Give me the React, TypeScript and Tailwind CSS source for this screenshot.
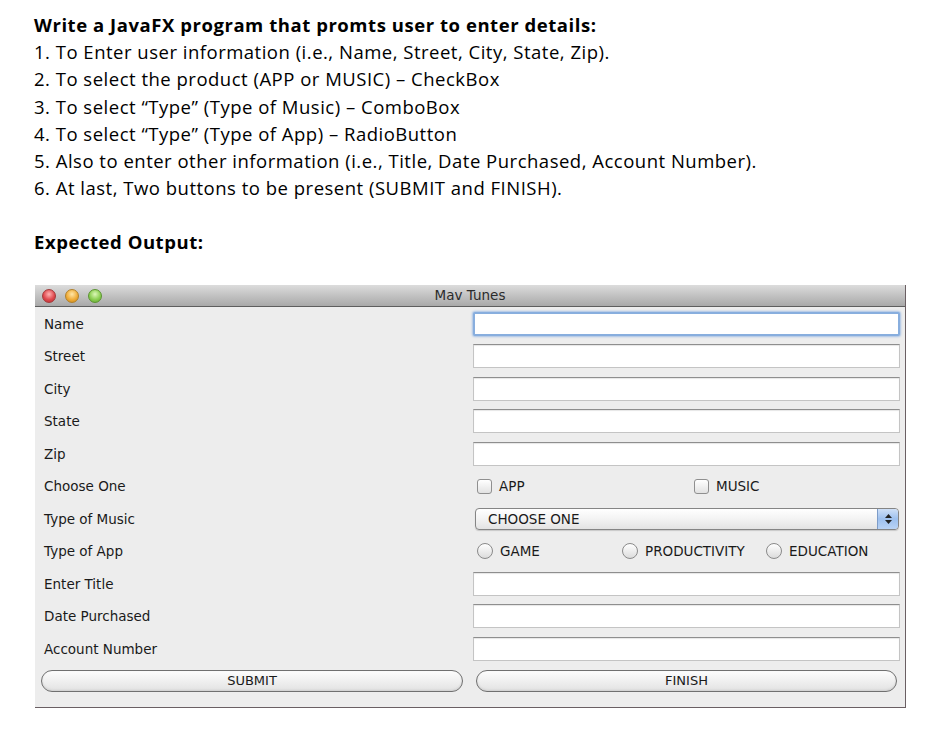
import React from "react"

const lines = [
  "1. To Enter user information (i.e., Name, Street, City, State, Zip).",
  "2. To select the product (APP or MUSIC) \u2013 CheckBox",
  "3. To select \u201cType\u201d (Type of Music) \u2013 ComboBox",
  "4. To select \u201cType\u201d (Type of App) \u2013 RadioButton",
  "5. Also to enter other information (i.e., Title, Date Purchased, Account Number).",
  "6. At last, Two buttons to be present (SUBMIT and FINISH).",
]

function Field({ focused = false }: { focused?: boolean }) {
  if (focused) {
    return (
      <div className="h-[24px] w-full rounded-[2px] border-2 border-[#88aede] bg-white shadow-[0_0_2px_1px_#a9c3e6]" />
    )
  }
  return (
    <div className="h-[24px] w-full border border-[#c4c4c4] border-t-[#8e8e8e] bg-white shadow-[inset_0_1px_1px_#e6e6e6]" />
  )
}

function CheckBox({ label }: { label: string }) {
  return (
    <div className="flex items-center gap-[7px]">
      <div className="h-[15px] w-[15px] rounded-[3px] border border-[#8f8f8f] bg-gradient-to-b from-white to-[#e2e2e2]" />
      <span>{label}</span>
    </div>
  )
}

function Radio({ label }: { label: string }) {
  return (
    <div className="flex items-center gap-[7px]">
      <div className="h-[16px] w-[16px] rounded-full border border-[#8a8a8a] bg-gradient-to-b from-white to-[#dcdcdc]" />
      <span>{label}</span>
    </div>
  )
}

function Row({ label, children }: { label: string; children: React.ReactNode }) {
  return (
    <div className="grid h-[32.5px] grid-cols-[438px_1fr] items-center">
      <div className="pl-[9px]">{label}</div>
      <div className="pr-[5px]">{children}</div>
    </div>
  )
}

function PillButton({ label }: { label: string }) {
  return (
    <div className="flex h-[22px] items-center justify-center rounded-full border border-[#707070] bg-gradient-to-b from-[#fdfdfd] via-[#f0f0f0] to-[#e2e2e2] text-[13px] shadow-[inset_0_-1px_2px_#cfcfcf]">
      {label}
    </div>
  )
}

export default function App() {
  return (
    <div className="min-h-[730px] bg-white font-['Open_Sans','Lato',sans-serif] text-black">
      <div className="pl-[34px] pt-[11px] text-[18.5px] leading-[27.2px] tracking-[0.5px]">
        <div className="font-bold tracking-[0.55px]">Write a JavaFX program that promts user to enter details:</div>
        {lines.map((l) => (
          <div key={l}>{l}</div>
        ))}
        <div className="mt-[27px] font-bold tracking-[0.55px]">Expected Output:</div>
      </div>

      <div className="ml-[35px] mt-[29px] w-[871px] border-r border-b border-[#6a5f63] bg-[#ededed] font-['DejaVu_Sans','Liberation_Sans',sans-serif] text-[13.5px] text-[#1a1a1a]">
        {/* title bar */}
        <div className="relative flex h-[22px] items-center justify-center border-b border-[#5e5e5e] bg-gradient-to-b from-[#dcdcdc] to-[#a9a9a9]">
          <div className="absolute left-[7px] top-[4px] flex gap-[9px]">
            <div className="h-[14px] w-[14px] rounded-full border border-[#a23a3a] bg-[radial-gradient(circle_at_50%_35%,#ffb3b3,#e04a4f_55%,#b8282d)]" />
            <div className="h-[14px] w-[14px] rounded-full border border-[#b0802a] bg-[radial-gradient(circle_at_50%_35%,#ffe6a8,#f0ad3a_55%,#c98410)]" />
            <div className="h-[14px] w-[14px] rounded-full border border-[#5a9330] bg-[radial-gradient(circle_at_50%_35%,#dcf7b8,#8ccf52_55%,#5ea22d)]" />
          </div>
          <span className="text-[13.5px] text-[#2b2b2b]">Mav Tunes</span>
        </div>

        {/* form */}
        <div className="pt-[1px]">
          <Row label="Name">
            <Field focused />
          </Row>
          <Row label="Street">
            <Field />
          </Row>
          <Row label="City">
            <Field />
          </Row>
          <Row label="State">
            <Field />
          </Row>
          <Row label="Zip">
            <Field />
          </Row>
          <Row label="Choose One">
            <div className="grid grid-cols-[217px_1fr] pl-[4px]">
              <CheckBox label="APP" />
              <CheckBox label="MUSIC" />
            </div>
          </Row>
          <Row label="Type of Music">
            <div className="ml-[2px] mr-[1px] flex h-[22px] items-center overflow-hidden rounded-[4px] border border-[#858585] bg-gradient-to-b from-white via-[#f3f3f3] to-[#e3e3e3] shadow-[0_1px_1px_#c8c8c8]">
              <span className="flex-1 pl-[12px]">CHOOSE ONE</span>
              <div className="flex h-full w-[21px] flex-col items-center justify-center gap-[2px] rounded-r-[3px] border-l border-[#7d9cc8] bg-gradient-to-b from-[#cfe0f7] via-[#9dc0ee] to-[#b9d3f5]">
                <svg width="7" height="4" viewBox="0 0 7 4">
                  <path d="M3.5 0 L7 4 L0 4 Z" fill="#222" />
                </svg>
                <svg width="7" height="4" viewBox="0 0 7 4">
                  <path d="M0 0 L7 0 L3.5 4 Z" fill="#222" />
                </svg>
              </div>
            </div>
          </Row>
          <Row label="Type of App">
            <div className="grid grid-cols-[145px_144px_1fr] pl-[4px]">
              <Radio label="GAME" />
              <Radio label="PRODUCTIVITY" />
              <Radio label="EDUCATION" />
            </div>
          </Row>
          <Row label="Enter Title">
            <Field />
          </Row>
          <Row label="Date Purchased">
            <Field />
          </Row>
          <Row label="Account Number">
            <Field />
          </Row>
        </div>

        {/* buttons */}
        <div className="grid grid-cols-[422px_421px] gap-[13px] pl-[6px] pt-[5px] pb-[15px]">
          <PillButton label="SUBMIT" />
          <PillButton label="FINISH" />
        </div>
      </div>
    </div>
  )
}
